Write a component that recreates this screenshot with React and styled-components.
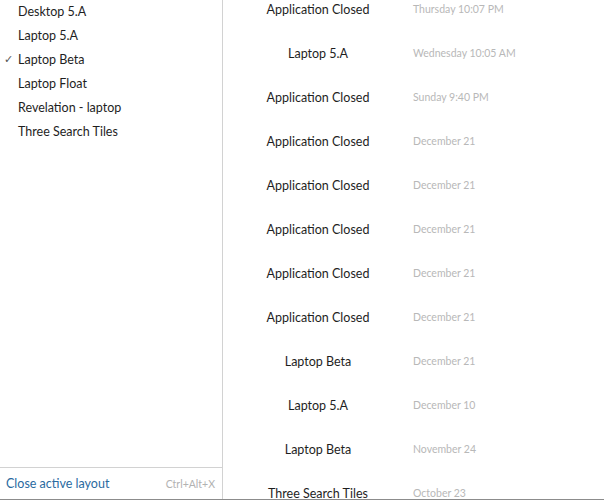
import React from 'react'
import styled, { createGlobalStyle } from 'styled-components'

const GlobalStyle = createGlobalStyle`
  html, body {
    margin: 0;
    padding: 0;
    background: #ffffff;
  }
  body {
    font-family: Lato, "Noto Sans", sans-serif;
    color: #1e1e1e;
  }
`

const layouts = [
  { name: 'Desktop 5.A' },
  { name: 'Laptop 5.A' },
  { name: 'Laptop Beta', active: true },
  { name: 'Laptop Float' },
  { name: 'Revelation - laptop' },
  { name: 'Three Search Tiles' },
]

const history = [
  ['Application Closed', 'Thursday 10:07 PM'],
  ['Laptop 5.A', 'Wednesday 10:05 AM'],
  ['Application Closed', 'Sunday 9:40 PM'],
  ['Application Closed', 'December 21'],
  ['Application Closed', 'December 21'],
  ['Application Closed', 'December 21'],
  ['Application Closed', 'December 21'],
  ['Application Closed', 'December 21'],
  ['Laptop Beta', 'December 21'],
  ['Laptop 5.A', 'December 10'],
  ['Laptop Beta', 'November 24'],
  ['Three Search Tiles', 'October 23'],
]

const Page = styled.div`
  height: 501px;
  display: flex;
  flex-direction: column;
`

const Main = styled.div`
  height: 499px;
  display: flex;
  border-bottom: 1px solid #8c8c8c;
  overflow: hidden;
`

const Sidebar = styled.div`
  width: 222px;
  flex-shrink: 0;
  display: flex;
  flex-direction: column;
  border-right: 1px solid #d2d2d2;
`

const LayoutList = styled.ul`
  flex: 1;
  list-style: none;
  margin: -1px 0 0;
  padding: 0;
`

const LayoutItem = styled.li`
  height: 24px;
  display: flex;
  align-items: center;
  font-size: 12.5px;
  color: #1e1e1e;
  padding-left: 4px;
`

const Check = styled.span`
  width: 14px;
  font-size: 11px;
  color: #555555;
  visibility: ${(p) => (p.$on ? 'visible' : 'hidden')};
`

const Footer = styled.div`
  height: 31px;
  border-top: 1px solid #d2d2d2;
  display: flex;
  align-items: center;
  justify-content: space-between;
  padding: 0 7px 0 6px;
`

const CloseLink = styled.a`
  font-size: 12.5px;
  color: #2a6aa0;
  text-decoration: none;
  cursor: pointer;
`

const Shortcut = styled.span`
  font-size: 10.5px;
  color: #b2b2b2;
`

const HistoryPane = styled.div`
  flex: 1;
  overflow: hidden;
`

const HistoryList = styled.div`
  margin-top: -13px;
`

const HistoryRow = styled.div`
  height: 44px;
  display: grid;
  grid-template-columns: 190px 1fr;
  align-items: center;
`

const EntryName = styled.span`
  text-align: center;
  font-size: 12.5px;
  color: #1e1e1e;
`

const EntryDate = styled.span`
  font-size: 10.5px;
  color: #b8b8b8;
`

export default function App() {
  return (
    <>
      <GlobalStyle />
      <Page>
        <Main>
          <Sidebar>
            <LayoutList>
              {layouts.map((l) => (
                <LayoutItem key={l.name}>
                  <Check $on={l.active}>✓</Check>
                  {l.name}
                </LayoutItem>
              ))}
            </LayoutList>
            <Footer>
              <CloseLink>Close active layout</CloseLink>
              <Shortcut>Ctrl+Alt+X</Shortcut>
            </Footer>
          </Sidebar>
          <HistoryPane>
            <HistoryList>
              {history.map(([name, date], i) => (
                <HistoryRow key={i}>
                  <EntryName>{name}</EntryName>
                  <EntryDate>{date}</EntryDate>
                </HistoryRow>
              ))}
            </HistoryList>
          </HistoryPane>
        </Main>
      </Page>
    </>
  )
}
